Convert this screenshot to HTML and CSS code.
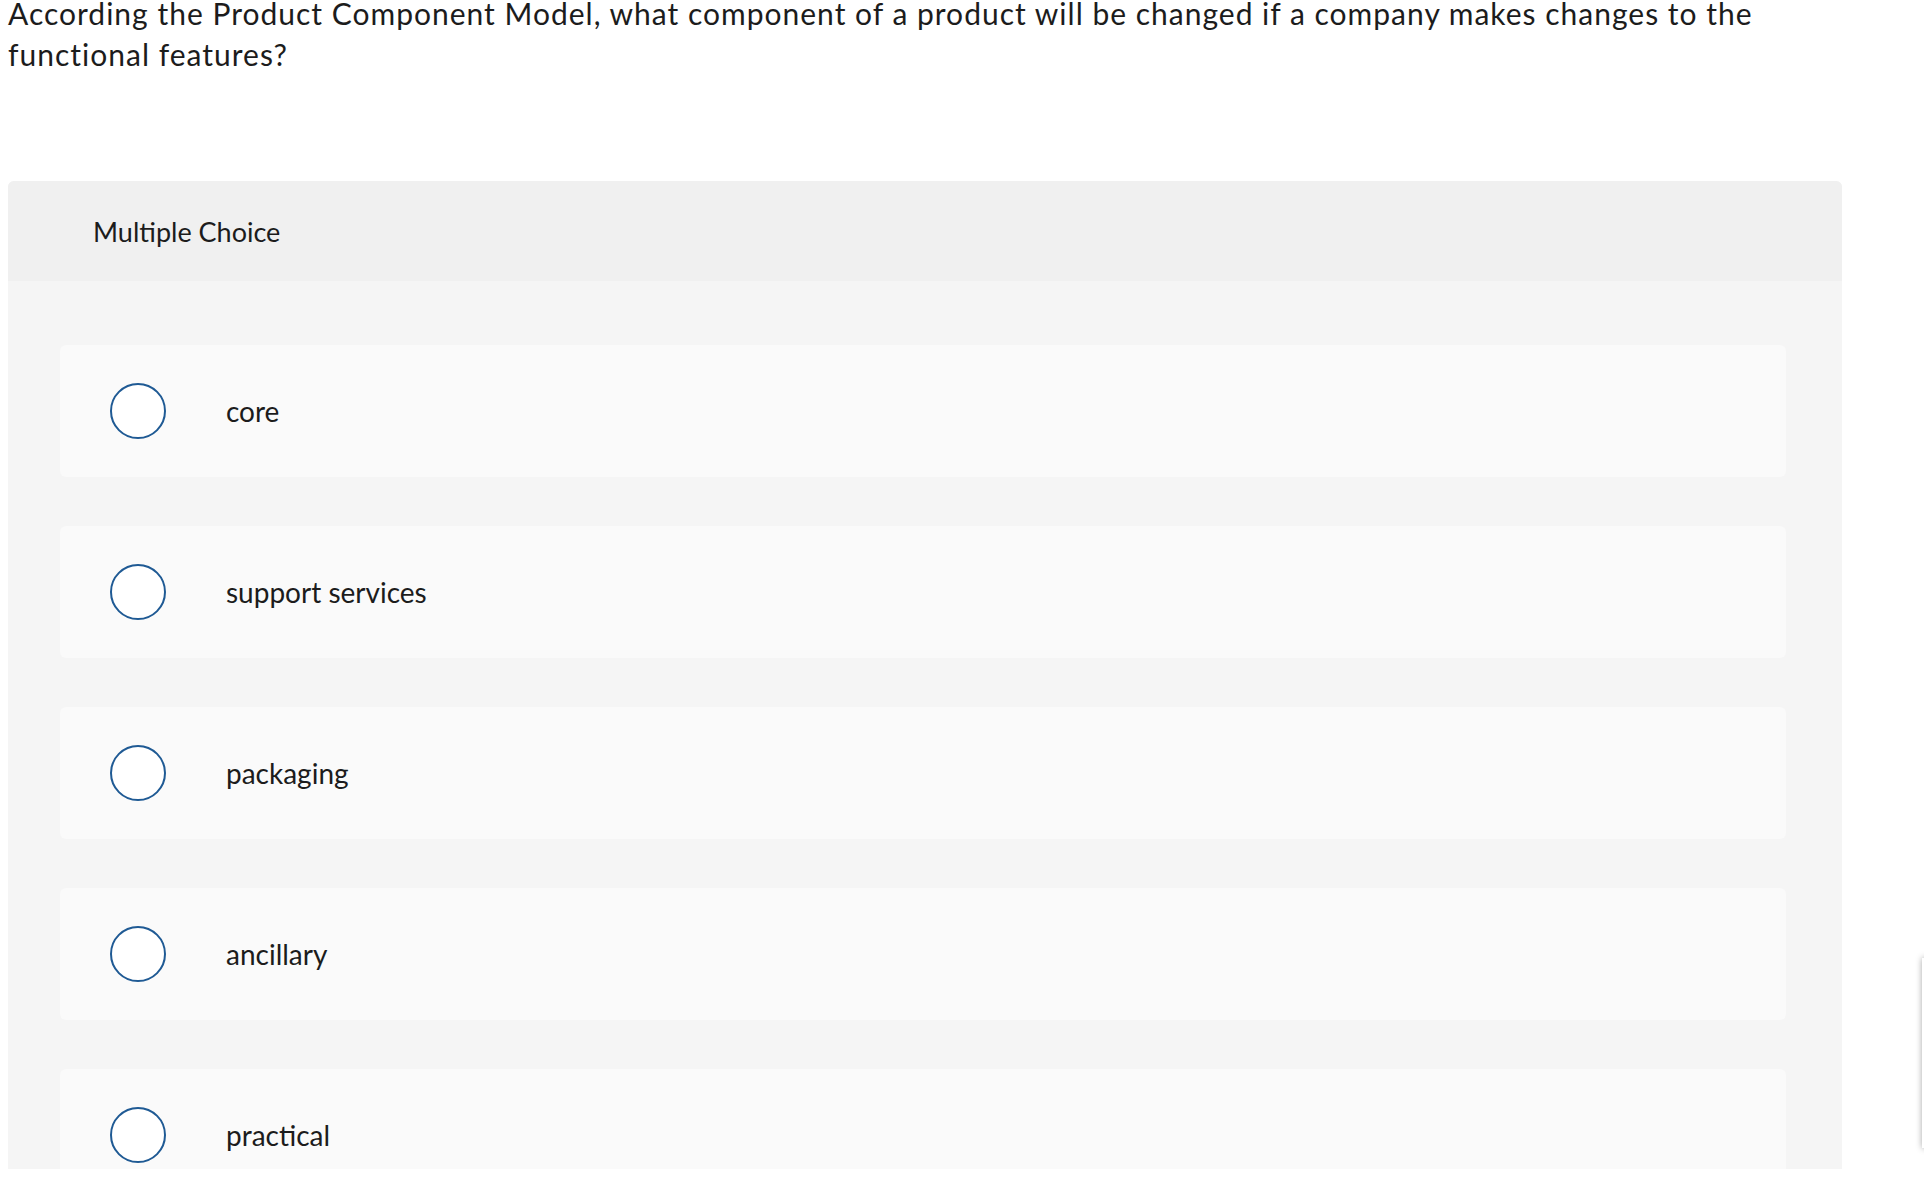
FILE: index.html
```html
<!DOCTYPE html>
<html lang="en">
<head>
<meta charset="utf-8">
<title>Multiple Choice</title>
<link rel="stylesheet" href="styles.css">
</head>
<body>
<div class="question">According the Product Component Model, what component of a product will be changed if a company makes changes to the functional features?</div>
<section class="panel">
  <header class="panel-head">Multiple Choice</header>
  <div class="panel-body">
    <label class="option"><span class="radio"></span><span class="label">core</span></label>
    <label class="option"><span class="radio"></span><span class="label">support services</span></label>
    <label class="option"><span class="radio"></span><span class="label">packaging</span></label>
    <label class="option"><span class="radio"></span><span class="label">ancillary</span></label>
    <label class="option"><span class="radio"></span><span class="label">practical</span></label>
  </div>
</section>
<div class="edge-shadow"></div>
</body>
</html>
```
FILE: styles.css
```css
html, body {
  margin: 0;
  padding: 0;
  background: #ffffff;
  overflow: hidden;
}
body {
  padding: 0 8px;
  font-family: Lato, "Open Sans", sans-serif;
  color: #1c1c1c;
  height: 1192px;
  position: relative;
}
.question {
  font-size: 30px;
  letter-spacing: 1px;
  line-height: 41px;
  margin-top: -7px;
  max-width: 1834px;
  margin-bottom: 106px;
}
.panel {
  width: 1834px;
  height: 988px;
  overflow: hidden;
  background: #f5f5f5;
  border-radius: 6px 6px 0 0;
}
.panel-head {
  height: 100px;
  display: flex;
  align-items: center;
  padding-left: 85px;
  background: #f0f0f0;
  font-size: 27px;
}
.panel-body {
  display: flex;
  flex-direction: column;
  gap: 49px;
  padding: 64px 56px 0 52px;
}
.option {
  height: 132px;
  flex: none;
  background: #fafafa;
  border-radius: 6px;
  display: flex;
  align-items: center;
  padding-left: 50px;
}
.radio {
  width: 56px;
  height: 56px;
  box-sizing: border-box;
  border: 2px solid #1f5a94;
  border-radius: 50%;
  background: #ffffff;
  flex: none;
}
.label {
  margin-left: 60px;
  font-size: 28px;
}
.edge-shadow {
  position: absolute;
  left: 1922px;
  top: 958px;
  width: 20px;
  height: 190px;
  background: #fff;
  box-shadow: 0 0 6px rgba(0,0,0,0.35);
}
```
